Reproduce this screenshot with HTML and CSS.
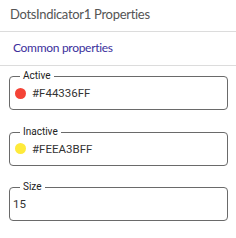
FILE: index.html
```html
<!DOCTYPE html>
<html lang="en">
<head>
    <meta charset="UTF-8">
    <meta name="viewport" content="width=device-width, initial-scale=1.0">
    <title>DotsIndicator1 Properties</title>
    <link rel="stylesheet" href="styles.css">
</head>
<body>
    <div class="panel">
        <div class="panel-title">DotsIndicator1 Properties</div>
        <div class="panel-section">Common properties</div>
        <div class="fields">
            <div class="field">
                <span class="field-label">Active</span>
                <span class="dot dot-red"></span>
                <span class="field-value">#F44336FF</span>
            </div>
            <div class="field">
                <span class="field-label">Inactive</span>
                <span class="dot dot-yellow"></span>
                <span class="field-value">#FEEA3BFF</span>
            </div>
            <div class="field">
                <span class="field-label">Size</span>
                <span class="field-value">15</span>
            </div>
        </div>
    </div>
</body>
</html>
```

FILE: styles.css
```css
body {
    margin: 0;
    padding: 0;
    background: #fff;
    font-family: Lato, "Open Sans", sans-serif;
    overflow: hidden;
}

.panel {
    width: 236px;
}

.panel-title {
    height: 31px;
    line-height: 28px;
    padding-left: 10px;
    font-size: 13px;
    letter-spacing: -0.3px;
    color: #555;
    border-bottom: 1px solid #dcdcdc;
}

.panel-section {
    height: 33px;
    line-height: 32px;
    padding-left: 13px;
    font-size: 12px;
    letter-spacing: -0.3px;
    color: #3b2f9c;
    border-bottom: 1px solid #dcdcdc;
}

.fields {
    display: flex;
    flex-direction: column;
    gap: 21.5px;
    padding: 10px 8px 0 9px;
    font-family: Roboto, sans-serif;
}

.field {
    position: relative;
    display: flex;
    align-items: center;
    box-sizing: border-box;
    height: 34px;
    padding-left: 3px;
    border: 1px solid #6a6a6a;
    border-radius: 4px;
}

/* label sits on the top border */
.field-label {
    position: absolute;
    top: -7px;
    left: 10px;
    padding: 0 3px;
    background: #fff;
    font-size: 10px;
    line-height: 12px;
    color: #222;
}

.dot {
    width: 11px;
    height: 11px;
    border-radius: 50%;
    margin: 0 6px 0 2px;
}

.dot-red {
    background: #f44336;
}

.dot-yellow {
    background: #feea3b;
}

.field-value {
    font-size: 11.5px;
    color: #333;
}
```
